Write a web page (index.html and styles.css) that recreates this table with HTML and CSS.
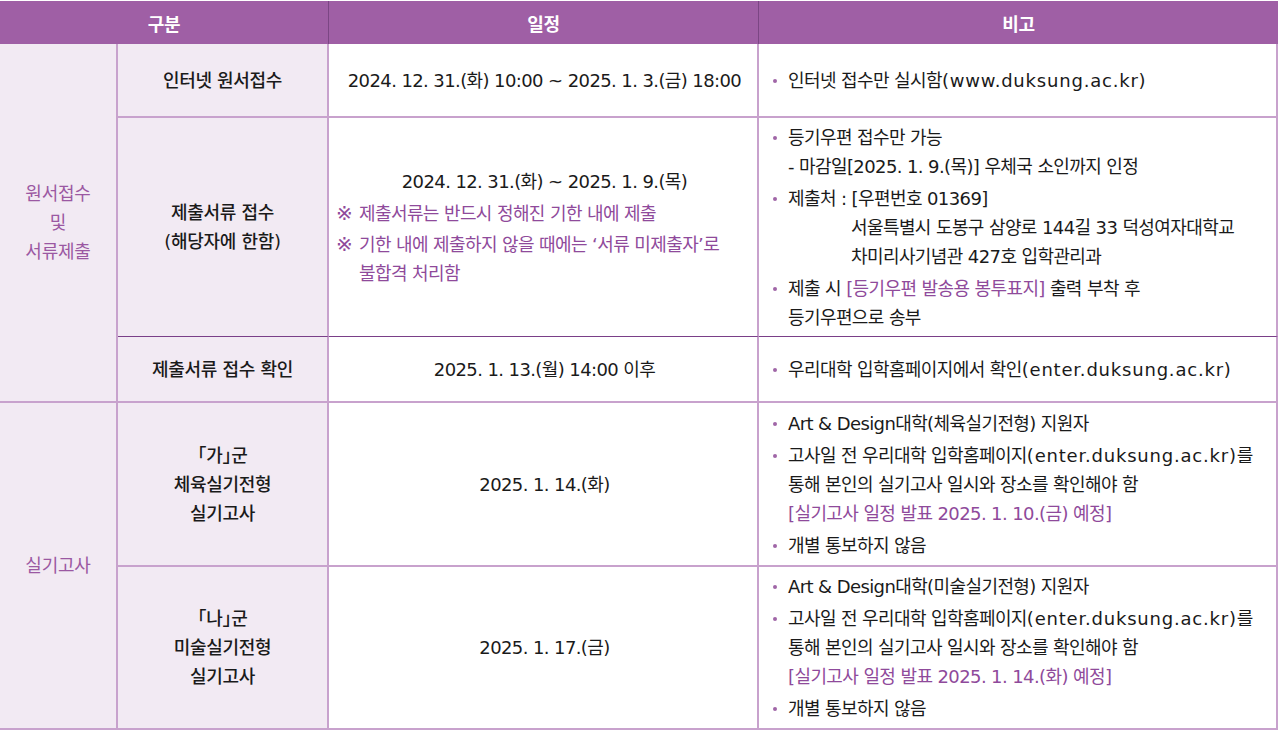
FILE: index.html
```html
<!DOCTYPE html>
<html lang="ko">
<head>
<meta charset="utf-8">
<title>전형일정</title>
<link rel="stylesheet" href="styles.css">
</head>
<body>
<table class="sched">
  <colgroup>
    <col class="c-group">
    <col class="c-item">
    <col class="c-date">
    <col class="c-note">
  </colgroup>
  <thead>
    <tr>
      <th colspan="2">구분</th>
      <th>일정</th>
      <th class="last">비고</th>
    </tr>
  </thead>
  <tbody>
    <tr class="r1">
      <td class="group" rowspan="3">원서접수<br>및<br>서류제출</td>
      <td class="item">인터넷 원서접수</td>
      <td class="date">2024. 12. 31.(화) 10:00 ~ 2025. 1. 3.(금) 18:00</td>
      <td class="note">
        <ul class="bullets">
          <li>인터넷 접수만 실시함<span class="url">(www.duksung.ac.kr)</span></li>
        </ul>
      </td>
    </tr>
    <tr class="r2">
      <td class="item dark">제출서류 접수<br>(해당자에 한함)</td>
      <td class="date dark">
        <div class="date-main">2024. 12. 31.(화) ~ 2025. 1. 9.(목)</div>
        <ul class="warn">
          <li>제출서류는 반드시 정해진 기한 내에 제출</li>
          <li>기한 내에 제출하지 않을 때에는 ‘서류 미제출자’로<br>불합격 처리함</li>
        </ul>
      </td>
      <td class="note dark">
        <ul class="bullets">
          <li>등기우편 접수만 가능<br>- 마감일[2025. 1. 9.(목)] 우체국 소인까지 인정</li>
          <li>제출처 : [우편번호 01369]<br><span class="addr">서울특별시 도봉구 삼양로 144길 33 덕성여자대학교<br>차미리사기념관 427호 입학관리과</span></li>
          <li>제출 시 <span class="hl">[등기우편 발송용 봉투표지]</span> 출력 부착 후<br>등기우편으로 송부</li>
        </ul>
      </td>
    </tr>
    <tr class="r3">
      <td class="item">제출서류 접수 확인</td>
      <td class="date">2025. 1. 13.(월) 14:00 이후</td>
      <td class="note">
        <ul class="bullets">
          <li>우리대학 입학홈페이지에서 확인<span class="url">(enter.duksung.ac.kr)</span></li>
        </ul>
      </td>
    </tr>
    <tr class="r4">
      <td class="group" rowspan="2">실기고사</td>
      <td class="item">｢가｣군<br>체육실기전형<br>실기고사</td>
      <td class="date">2025. 1. 14.(화)</td>
      <td class="note">
        <ul class="bullets">
          <li>Art &amp; Design대학(체육실기전형) 지원자</li>
          <li>고사일 전 우리대학 입학홈페이지<span class="url">(enter.duksung.ac.kr)</span>를<br>통해 본인의 실기고사 일시와 장소를 확인해야 함<br><span class="hl">[실기고사 일정 발표 2025. 1. 10.(금) 예정]</span></li>
          <li>개별 통보하지 않음</li>
        </ul>
      </td>
    </tr>
    <tr class="r5">
      <td class="item">｢나｣군<br>미술실기전형<br>실기고사</td>
      <td class="date">2025. 1. 17.(금)</td>
      <td class="note">
        <ul class="bullets">
          <li>Art &amp; Design대학(미술실기전형) 지원자</li>
          <li>고사일 전 우리대학 입학홈페이지<span class="url">(enter.duksung.ac.kr)</span>를<br>통해 본인의 실기고사 일시와 장소를 확인해야 함<br><span class="hl">[실기고사 일정 발표 2025. 1. 14.(화) 예정]</span></li>
          <li>개별 통보하지 않음</li>
        </ul>
      </td>
    </tr>
  </tbody>
</table>
</body>
</html>
```
FILE: styles.css
```css
html, body {
  margin: 0;
  padding: 0;
  background: #ffffff;
}

body {
  font-family: "DejaVu Sans", "Noto Sans CJK KR", sans-serif;
  color: #1a1a1a;
  font-size: 18px;
}

.sched {
  width: 1278px;
  margin-top: 1px;
  border-collapse: separate;
  border-spacing: 0;
  table-layout: fixed;
}

.c-group { width: 118px; }
.c-item { width: 211px; }
.c-date { width: 430px; }
.c-note { width: 519px; }

.sched th {
  height: 43px;
  padding: 0;
  background: #9f5fa5;
  color: #ffffff;
  font-family: "Noto Sans CJK KR", sans-serif;
  font-weight: 700;
  font-size: 18px;
  letter-spacing: -0.3px;
  text-align: center;
  vertical-align: middle;
  border-right: 1px solid #7b4684;
}

.sched th.last { border-right: 0; }

.sched td {
  padding: 0;
  vertical-align: middle;
  border-right: 2px solid #c8a2cd;
  border-bottom: 2px solid #c8a2cd;
  line-height: 29px;
  letter-spacing: -0.6px;
}

.sched td.dark { border-bottom: 1px solid #7a3f88; }

.sched .group {
  background: #f2eaf3;
  color: #9b58a2;
  text-align: center;
  letter-spacing: -0.2px;
}

.sched .item {
  background: #f2eaf3;
  text-align: center;
  font-weight: 500;
  letter-spacing: -0.3px;
}

.sched .date {
  text-align: center;
  padding: 0 4px 0 7px;
}

.sched .note {
  text-align: left;
  padding: 0 6px 0 16px;
}

.r1 td { height: 72px; }
.r2 td { height: 218px; }
.r3 td { height: 64px; }
.r4 td { height: 162px; }
.r5 td { height: 161px; }

.date-main { margin-bottom: 3px; }

.warn {
  list-style: none;
  margin: 0;
  padding: 0;
  text-align: left;
  color: #8f4a9b;
}

.warn li {
  position: relative;
  padding-left: 23px;
  margin-top: 2px;
  white-space: nowrap;
}

.warn li::before {
  content: "※";
  position: absolute;
  left: 0;
  top: 0;
  font-size: 20px;
}

.bullets {
  list-style: none;
  margin: 0;
  padding: 0;
}

.bullets li {
  position: relative;
  padding-left: 13px;
  margin: 3px 0;
  white-space: nowrap;
}

.bullets li::before {
  content: "";
  position: absolute;
  left: -2px;
  top: 13px;
  width: 4px;
  height: 4px;
  border-radius: 50%;
  background: #a066a7;
}

.url { letter-spacing: 0.8px; }

.addr {
  display: inline-block;
  padding-left: 63px;
}

.hl { color: #8f4a9b; }
```
